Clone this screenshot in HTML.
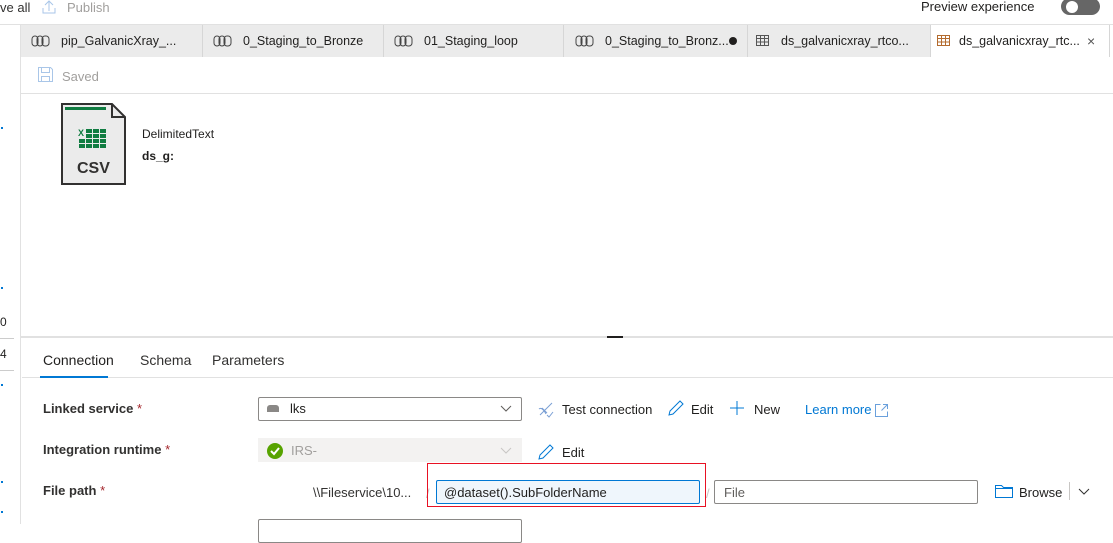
<!DOCTYPE html>
<html><head><meta charset="utf-8"><style>
*{box-sizing:border-box;margin:0;padding:0}
body{width:1113px;height:524px;overflow:hidden;background:#fff;font-family:"Liberation Sans",sans-serif;font-size:13px;color:#201f1e;position:relative}
.a{position:absolute;white-space:nowrap}
.tab{position:absolute;top:25px;height:32px;background:#ebebeb;border-right:1px solid #d6d6d6;font-size:12.5px;line-height:32px;overflow:hidden}
.tab .ic{position:absolute;left:10px;top:10px}
.tab span{position:absolute;left:40px}
.dot{position:absolute;left:1px;width:2px;height:2px;background:#0078d4}
.lbl{position:absolute;left:43px;font-size:13px;font-weight:bold;color:#323130}
.lbl i{color:#a4262c;font-style:normal;font-weight:normal}
.box{position:absolute;border:1px solid #8a8886;border-radius:2px;height:24px}
</style></head><body>
<div class="a" style="left:0;top:0;font-size:13px;color:#323130">ve all</div>
<svg class="a" style="left:41px;top:0" width="16" height="14"><path d="M8 1v10M4 5l4-4 4 4M2 8v5h12V8" stroke="#a9c6e8" fill="none"/></svg>
<div class="a" style="left:67px;top:0;color:#a19f9d">Publish</div>
<div class="a" style="left:921px;top:-1px;color:#201f1e">Preview experience</div>
<div class="a" style="left:1061px;top:-2px;width:39px;height:17px;border-radius:9px;background:#666"></div>
<div class="a" style="left:1066px;top:1px;width:12px;height:12px;border-radius:6px;background:#fff"></div>
<div class="a" style="left:0;top:24px;width:1113px;height:1px;background:#e1e1e1"></div>
<div class="a" style="left:20px;top:25px;width:1px;height:499px;background:#e1e1e1"></div>
<div class="tab" style="left:21px;width:182px"><svg class="ic" width="20" height="12"><rect x="1" y="1" width="6" height="10" rx="3" fill="none" stroke="#444"/><rect x="6" y="1" width="6" height="10" rx="3" fill="none" stroke="#444"/><rect x="11" y="1" width="7" height="10" rx="3" fill="none" stroke="#444"/></svg><span>pip_GalvanicXray_...</span></div>
<div class="tab" style="left:203px;width:181px"><svg class="ic" width="20" height="12"><rect x="1" y="1" width="6" height="10" rx="3" fill="none" stroke="#444"/><rect x="6" y="1" width="6" height="10" rx="3" fill="none" stroke="#444"/><rect x="11" y="1" width="7" height="10" rx="3" fill="none" stroke="#444"/></svg><span>0_Staging_to_Bronze</span></div>
<div class="tab" style="left:384px;width:180px"><svg class="ic" width="20" height="12"><rect x="1" y="1" width="6" height="10" rx="3" fill="none" stroke="#444"/><rect x="6" y="1" width="6" height="10" rx="3" fill="none" stroke="#444"/><rect x="11" y="1" width="7" height="10" rx="3" fill="none" stroke="#444"/></svg><span>01_Staging_loop</span></div>
<div class="tab" style="left:564px;width:184px"><svg class="ic" style="left:11px" width="20" height="12"><rect x="1" y="1" width="6" height="10" rx="3" fill="none" stroke="#444"/><rect x="6" y="1" width="6" height="10" rx="3" fill="none" stroke="#444"/><rect x="11" y="1" width="7" height="10" rx="3" fill="none" stroke="#444"/></svg><span style="left:41px">0_Staging_to_Bronz...</span><div class="a" style="left:165px;top:12px;width:8px;height:8px;border-radius:4px;background:#201f1e"></div></div>
<div class="tab" style="left:748px;width:183px"><svg class="ic" style="left:8px" width="14" height="12"><rect x=".5" y=".5" width="12" height="10" fill="none" stroke="#555"/><path d="M.5 3.5h12M.5 7h12M4.5 .5v10M8.5 .5v10" stroke="#555"/></svg><span style="left:33px">ds_galvanicxray_rtco...</span></div>
<div class="tab" style="left:931px;width:179px;background:#fff"><svg class="ic" style="left:6px" width="14" height="12"><rect x=".5" y=".5" width="12" height="10" fill="none" stroke="#b36b2e"/><path d="M.5 3.5h12M.5 7h12M4.5 .5v10M8.5 .5v10" stroke="#b36b2e"/></svg><span style="left:28px">ds_galvanicxray_rtc...</span><span style="left:156px;font-size:14px;color:#555">×</span></div>
<svg class="a" style="left:37px;top:66px" width="17" height="17"><path d="M1.5 1.5h12l2 2v12h-14z M4.5 1.5v5h8v-5 M4.5 15.5v-5h8v5" fill="none" stroke="#a9c6e8"/></svg>
<div class="a" style="left:62px;top:69px;color:#a19f9d">Saved</div>
<div class="a" style="left:21px;top:93px;width:1092px;height:1px;background:#e1e1e1"></div>
<svg class="a" style="left:61px;top:103px" width="65" height="82"><path d="M1 1h50l13 13v67H1z" fill="#ebebeb" stroke="#323130" stroke-width="2"/><path d="M51 1v13h13" fill="none" stroke="#323130" stroke-width="2"/><rect x="4" y="4" width="41" height="3" fill="#107c41"/><text x="17" y="33" font-size="9" font-weight="bold" fill="#107c41" font-family="Liberation Sans">X</text><g fill="#107c41"><rect x="25" y="26" width="6" height="4"/><rect x="32" y="26" width="6" height="4"/><rect x="39" y="26" width="6" height="4"/><rect x="25" y="31" width="6" height="4"/><rect x="32" y="31" width="6" height="4"/><rect x="39" y="31" width="6" height="4"/><rect x="18" y="36" width="6" height="4"/><rect x="25" y="36" width="6" height="4"/><rect x="32" y="36" width="6" height="4"/><rect x="39" y="36" width="6" height="4"/><rect x="18" y="41" width="6" height="4"/><rect x="25" y="41" width="6" height="4"/><rect x="32" y="41" width="6" height="4"/><rect x="39" y="41" width="6" height="4"/></g><text x="16" y="70" font-size="16" font-weight="bold" fill="#323130" font-family="Liberation Sans">CSV</text></svg>
<div class="a" style="left:142px;top:127px;font-size:12px">DelimitedText</div>
<div class="a" style="left:142px;top:149px;font-size:12px;font-weight:bold">ds_g:</div>
<div class="dot" style="top:127px"></div><div class="dot" style="top:287px"></div><div class="dot" style="top:384px"></div><div class="dot" style="top:481px"></div><div class="dot" style="top:511px"></div>
<div class="a" style="left:0;top:315px;font-size:12px">0</div>
<div class="a" style="left:0;top:338px;width:14px;height:1px;background:#ccc"></div>
<div class="a" style="left:0;top:347px;font-size:12px">4</div>
<div class="a" style="left:0;top:370px;width:14px;height:1px;background:#ccc"></div>
<div class="a" style="left:21px;top:336px;width:1092px;height:2px;background:#e1e1e1"></div>
<div class="a" style="left:607px;top:336px;width:16px;height:2px;background:#201f1e"></div>
<div class="a" style="left:43px;top:352px;font-size:14px">Connection</div>
<div class="a" style="left:140px;top:352px;font-size:14px;color:#323130">Schema</div>
<div class="a" style="left:212px;top:352px;font-size:14px;color:#323130">Parameters</div>
<div class="a" style="left:22px;top:377px;width:1091px;height:1px;background:#e1e1e1"></div>
<div class="a" style="left:40px;top:376px;width:68px;height:2px;background:#0078d4"></div>
<div class="lbl" style="top:401px">Linked service <i>*</i></div>
<div class="lbl" style="top:442px">Integration runtime <i>*</i></div>
<div class="lbl" style="top:483px">File path <i>*</i></div>
<div class="box" style="left:258px;top:397px;width:264px"></div>
<div class="a" style="left:267px;top:405px;width:12px;height:7px;background:#8a8886;border-radius:3px 3px 0 0"></div>
<div class="a" style="left:290px;top:401px;font-size:13px">lks</div>
<svg class="a" style="left:500px;top:405px" width="12" height="8"><path d="M1 1l5 5 5-5" stroke="#605e5c" fill="none"/></svg>
<div class="a" style="left:258px;top:438px;width:264px;height:24px;background:#f3f2f1"></div>
<svg class="a" style="left:267px;top:443px" width="16" height="16"><circle cx="8" cy="8" r="8" fill="#57a300"/><path d="M4 8l3 3 5-6" stroke="#fff" stroke-width="2" fill="none"/></svg>
<div class="a" style="left:291px;top:443px;color:#a19f9d">IRS-</div>
<svg class="a" style="left:500px;top:447px" width="12" height="8"><path d="M1 1l5 5 5-5" stroke="#c8c6c4" fill="none"/></svg>
<svg class="a" style="left:537px;top:400px" width="18" height="18"><path d="M3 15l12-12M5 8l5 5M2 9c3-3 7 5 7 5" stroke="#7a9fd4" fill="none"/><path d="M10 15l2 2 4-5" stroke="#7a9fd4" fill="none"/></svg>
<div class="a" style="left:562px;top:402px">Test connection</div>
<svg class="a" style="left:667px;top:399px" width="18" height="18"><path d="M2 16l1-4L13 2l3 3L6 15z" stroke="#0078d4" fill="none"/></svg>
<div class="a" style="left:691px;top:402px">Edit</div>
<svg class="a" style="left:729px;top:400px" width="16" height="16"><path d="M8 1v14M1 8h14" stroke="#0078d4"/></svg>
<div class="a" style="left:754px;top:402px">New</div>
<div class="a" style="left:805px;top:402px;color:#0078d4">Learn more</div>
<svg class="a" style="left:875px;top:404px" width="13" height="13"><path d="M5.5 .5h-5v12h12v-5M8 .5h4.5v4.5M12.5 .5l-6 6" stroke="#6aa0dc" fill="none"/></svg>
<svg class="a" style="left:537px;top:443px" width="18" height="18"><path d="M2 16l1-4L13 2l3 3L6 15z" stroke="#0078d4" fill="none"/></svg>
<div class="a" style="left:562px;top:445px">Edit</div>
<div class="a" style="left:313px;top:485px;color:#323130">\\Fileservice\10...</div>
<div class="a" style="left:426px;top:486px;color:#c8c6c4">/</div>
<div class="a" style="left:427px;top:463px;width:279px;height:44px;border:1px solid #e81123"></div>
<div class="box" style="left:436px;top:480px;width:264px;background:#eff6fc;border-color:#0078d4"></div>
<div class="a" style="left:444px;top:485px">@dataset().SubFolderName</div>
<div class="a" style="left:706px;top:486px;color:#c8c6c4">/</div>
<div class="box" style="left:714px;top:480px;width:264px"></div>
<div class="a" style="left:724px;top:485px;color:#605e5c">File</div>
<svg class="a" style="left:995px;top:484px" width="18" height="14"><path d="M.5 1.5h6l2 2h9v10H.5zM.5 4.5h17" stroke="#0078d4" fill="none"/></svg>
<div class="a" style="left:1019px;top:485px">Browse</div>
<div class="a" style="left:1069px;top:482px;width:1px;height:18px;background:#c8c6c4"></div>
<svg class="a" style="left:1078px;top:488px" width="12" height="8"><path d="M1 1l5 5 5-5" stroke="#323130" fill="none"/></svg>
<div class="box" style="left:258px;top:519px;width:264px"></div>
</body></html>
